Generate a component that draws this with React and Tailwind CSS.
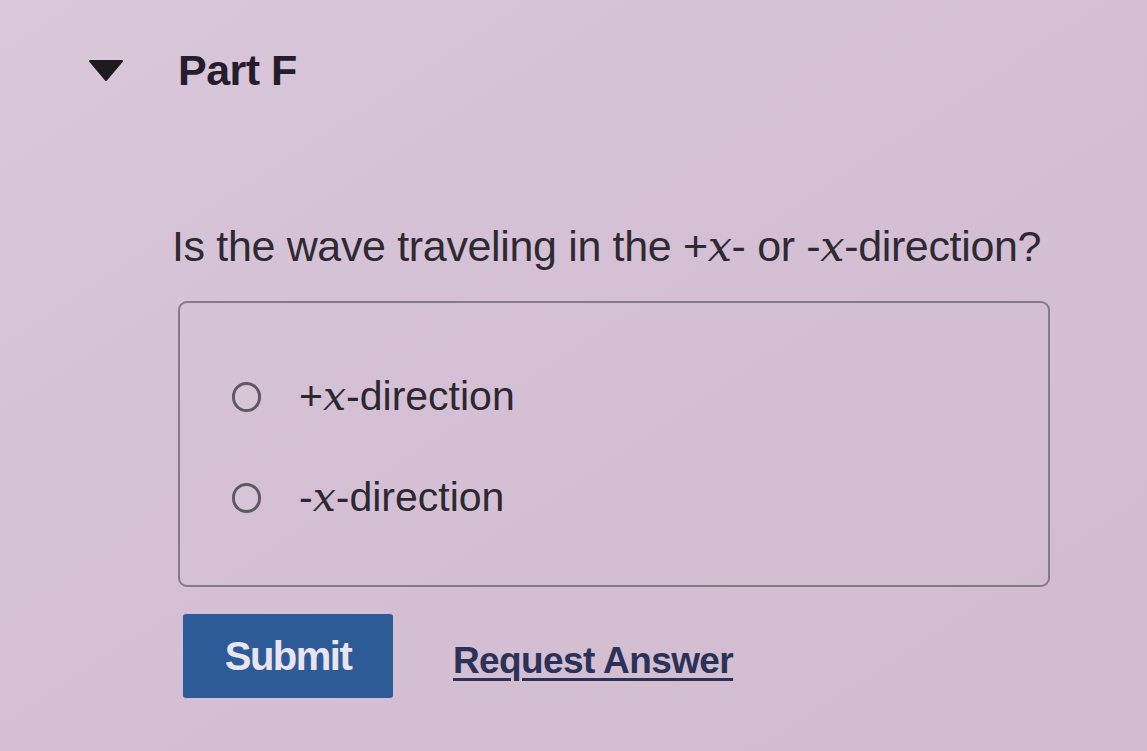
import React from "react";

const MathX = () => (
  <span className="italic" style={{ fontFamily: '"DejaVu Serif", "Liberation Serif", serif' }}>
    x
  </span>
);

function Radio({ children }) {
  return (
    <label className="flex items-center gap-[38px]">
      <span className="w-[29px] h-[30px] rounded-full border-[3px] border-[#5e5a60] bg-[#d8c6d8] shrink-0" />
      <span className="text-[41px] leading-none text-[#2c2830] tracking-[0px]">{children}</span>
    </label>
  );
}

export default function App() {
  return (
    <div
      className="w-[1147px] h-[751px] overflow-hidden bg-gradient-to-br from-[#dac7da] via-[#d4bfd4] to-[#d2bccf]"
      style={{ fontFamily: '"Liberation Sans", Arial, sans-serif' }}
    >
      {/* Part heading */}
      <div className="flex items-center pl-[88px] pt-[48px]">
        <svg width="36" height="24" viewBox="0 0 36 24" className="shrink-0">
          <path d="M2 3 L34 3 L18 22 Z" fill="#1f1a22" stroke="#1f1a22" strokeWidth="2" strokeLinejoin="round" />
        </svg>
        <h2 className="ml-[54px] text-[43px] font-bold text-[#241d2c] leading-[44px] tracking-[-0.5px]">Part F</h2>
      </div>

      {/* Question */}
      <p className="ml-[172px] mt-[133px] text-[43px] leading-none text-[#2e2a32] tracking-[-0.35px]">
        Is the wave traveling in the +<MathX />- or -<MathX />-direction?
      </p>

      {/* Choices */}
      <div className="ml-[178px] mt-[33px] w-[872px] h-[286px] rounded-[9px] border-2 border-[#857b86] flex flex-col gap-[60px] pl-[52px] pt-[73px]">
        <Radio>
          +<MathX />-direction
        </Radio>
        <Radio>
          -<MathX />-direction
        </Radio>
      </div>

      {/* Actions */}
      <div className="ml-[183px] mt-[27px] flex items-center gap-[60px]">
        <button className="w-[210px] h-[84px] rounded-[3px] bg-[#2d5b98] text-[#e9e4ee] text-[40px] font-bold tracking-[-1.5px]">
          Submit
        </button>
        <a className="mt-[10px] text-[37px] font-bold text-[#2c3158] underline underline-offset-[5px] decoration-[3px] tracking-[-0.6px]">
          Request Answer
        </a>
      </div>
    </div>
  );
}
